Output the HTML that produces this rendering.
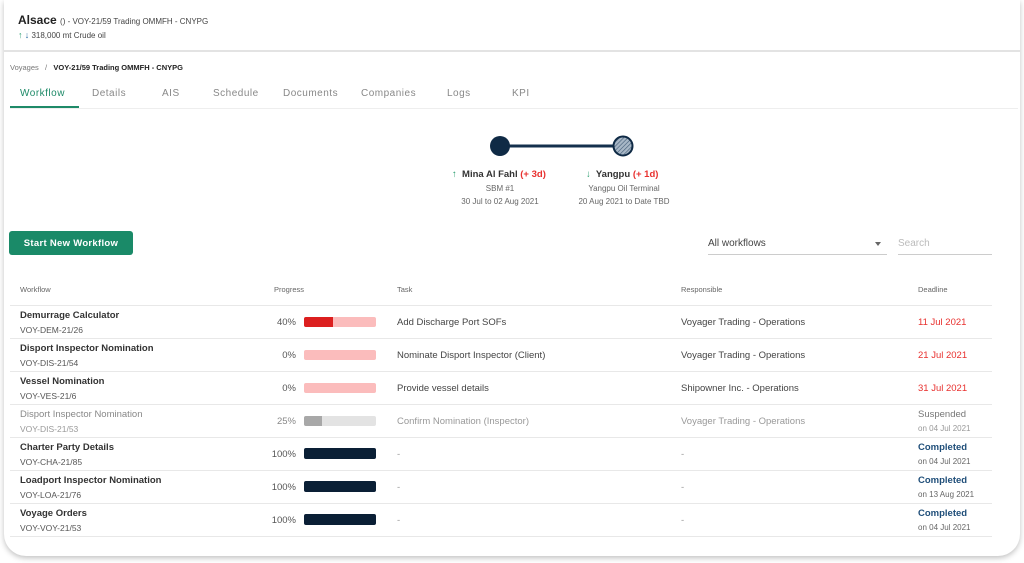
<!DOCTYPE html>
<html><head><style>
*{margin:0;padding:0;box-sizing:border-box}
body{width:1024px;height:563px;background:#fff;font-family:"Liberation Sans",sans-serif;position:relative;overflow:hidden;color:#222}
.card{position:absolute;left:4px;top:0;width:1016px;height:556px;border-radius:0 0 22px 22px;box-shadow:0 2px 6px rgba(0,0,0,.25);background:#fff}
.a{position:absolute;white-space:nowrap}
.hl{position:absolute;left:4px;width:1016px;height:2px;background:#e3e3e3}
.tab{position:absolute;top:88px;font-size:10px;color:#888;letter-spacing:.5px}
.row{position:absolute;left:10px;width:982px;height:1px;background:#e8e8e8}
.t1{font-size:9.5px;font-weight:bold;color:#333}
.t2{font-size:8.5px;color:#555}
.pct{font-size:9.5px;color:#555;text-align:right;width:40px}
.bar{position:absolute;left:304px;width:72px;height:10px;border-radius:2px;overflow:hidden}
.c{font-size:9.5px;color:#444}
.red{color:#e8302e;font-size:9.5px}
.done{color:#1f4e79;font-size:9.5px;font-weight:bold}
</style></head><body>
<div class="card"></div>
<div class="a" style="left:18px;top:13px;font-size:12px;font-weight:bold;color:#222">Alsace <span style="font-size:8px;font-weight:normal;color:#444">() - VOY-21/59 Trading OMMFH - CNYPG</span></div>
<div class="a" style="left:18px;top:30px;font-size:8px;color:#444"><span style="color:#2a9d6f;font-size:9px">↑</span> <span style="color:#2b6ca3;font-size:9px">↓</span> 318,000 mt Crude oil</div>
<div class="hl" style="top:50px"></div>
<div class="a" style="left:10px;top:63px;font-size:7.5px;color:#777">Voyages &nbsp;&nbsp;/&nbsp;&nbsp; <b style="color:#222">VOY-21/59 Trading OMMFH - CNYPG</b></div>
<div class="tab" style="left:20px;color:#1e8a68">Workflow</div>
<div class="tab" style="left:92px">Details</div>
<div class="tab" style="left:162px">AIS</div>
<div class="tab" style="left:213px">Schedule</div>
<div class="tab" style="left:283px">Documents</div>
<div class="tab" style="left:361px">Companies</div>
<div class="tab" style="left:447px">Logs</div>
<div class="tab" style="left:512px">KPI</div>
<div class="a" style="left:10px;top:106px;width:69px;height:2px;background:#1e8a68"></div>
<div class="a" style="left:10px;top:108px;width:1008px;height:1px;background:#eee"></div>
<svg class="a" style="left:488px;top:133px" width="148" height="26"><line x1="12" y1="13" x2="136" y2="13" stroke="#14304d" stroke-width="3"/><circle cx="12" cy="13" r="10" fill="#0f2a45"/><defs><pattern id="h" width="3" height="3" patternUnits="userSpaceOnUse" patternTransform="rotate(45)"><rect width="3" height="3" fill="#a8b7c6"/><line x1="0" y1="0" x2="0" y2="3" stroke="#3f5a75" stroke-width="1.2"/></pattern></defs><circle cx="135" cy="13" r="9.5" fill="url(#h)" stroke="#0f2a45" stroke-width="2"/></svg>
<div class="a" style="left:452px;top:169px;font-size:9.5px;font-weight:bold;color:#333"><span style="color:#2a9d6f">↑</span>&nbsp; Mina Al Fahl <span style="color:#e8302e">(+ 3d)</span></div>
<div class="a" style="left:440px;top:184px;width:120px;text-align:center;font-size:8px;color:#666">SBM #1</div>
<div class="a" style="left:440px;top:197px;width:120px;text-align:center;font-size:8px;color:#666">30 Jul to 02 Aug 2021</div>
<div class="a" style="left:586px;top:169px;font-size:9.5px;font-weight:bold;color:#333"><span style="color:#2a9d6f">↓</span>&nbsp; Yangpu <span style="color:#e8302e">(+ 1d)</span></div>
<div class="a" style="left:564px;top:184px;width:120px;text-align:center;font-size:8px;color:#666">Yangpu Oil Terminal</div>
<div class="a" style="left:564px;top:197px;width:120px;text-align:center;font-size:8px;color:#666">20 Aug 2021 to Date TBD</div>
<div class="a" style="left:9px;top:231px;width:124px;height:24px;background:#1a8a68;border-radius:3px;color:#fff;font-size:9.5px;font-weight:bold;line-height:25px;text-align:center;letter-spacing:.3px">Start New Workflow</div>
<div class="a" style="left:708px;top:238px;font-size:10px;color:#444">All workflows</div>
<div class="a" style="left:875px;top:242px;width:0;height:0;border-left:3px solid transparent;border-right:3px solid transparent;border-top:4px solid #666"></div>
<div class="a" style="left:708px;top:254px;width:179px;height:1px;background:#ccc"></div>
<div class="a" style="left:898px;top:238px;font-size:10px;color:#bbb">Search</div>
<div class="a" style="left:898px;top:254px;width:94px;height:1px;background:#ccc"></div>
<div class="a" style="left:20px;top:285px;font-size:7.5px;color:#666">Workflow</div>
<div class="a" style="left:274px;top:285px;font-size:7.5px;color:#666">Progress</div>
<div class="a" style="left:397px;top:285px;font-size:7.5px;color:#666">Task</div>
<div class="a" style="left:681px;top:285px;font-size:7.5px;color:#666">Responsible</div>
<div class="a" style="left:918px;top:285px;font-size:7.5px;color:#666">Deadline</div>
<div class="row" style="top:305px"></div><div class="row" style="top:338px"></div><div class="row" style="top:371px"></div><div class="row" style="top:404px"></div><div class="row" style="top:437px"></div><div class="row" style="top:470px"></div><div class="row" style="top:503px"></div><div class="row" style="top:536px"></div>

<div class="a t1" style="left:20px;top:310px">Demurrage Calculator</div><div class="a t2" style="left:20px;top:325px">VOY-DEM-21/26</div>
<div class="a pct" style="left:256px;top:317px">40%</div>
<div class="bar" style="top:317px;background:#fbbcbc"><div style="width:29px;height:10px;background:#dc1f1f"></div></div>
<div class="a c" style="left:397px;top:317px">Add Discharge Port SOFs</div><div class="a c" style="left:681px;top:317px">Voyager Trading - Operations</div><div class="a red" style="left:918px;top:317px">11 Jul 2021</div>

<div class="a t1" style="left:20px;top:343px">Disport Inspector Nomination</div><div class="a t2" style="left:20px;top:358px">VOY-DIS-21/54</div>
<div class="a pct" style="left:256px;top:350px">0%</div><div class="bar" style="top:350px;background:#fbbcbc"></div>
<div class="a c" style="left:397px;top:350px">Nominate Disport Inspector (Client)</div><div class="a c" style="left:681px;top:350px">Voyager Trading - Operations</div><div class="a red" style="left:918px;top:350px">21 Jul 2021</div>

<div class="a t1" style="left:20px;top:376px">Vessel Nomination</div><div class="a t2" style="left:20px;top:391px">VOY-VES-21/6</div>
<div class="a pct" style="left:256px;top:383px">0%</div><div class="bar" style="top:383px;background:#fbbcbc"></div>
<div class="a c" style="left:397px;top:383px">Provide vessel details</div><div class="a c" style="left:681px;top:383px">Shipowner Inc. - Operations</div><div class="a red" style="left:918px;top:383px">31 Jul 2021</div>

<div class="a t1" style="left:20px;top:409px;color:#888;font-weight:normal">Disport Inspector Nomination</div><div class="a t2" style="left:20px;top:424px;color:#999">VOY-DIS-21/53</div>
<div class="a pct" style="left:256px;top:416px;color:#888">25%</div>
<div class="bar" style="top:416px;background:#e3e3e3"><div style="width:18px;height:10px;background:#a8a8a8"></div></div>
<div class="a c" style="left:397px;top:416px;color:#999">Confirm Nomination (Inspector)</div><div class="a c" style="left:681px;top:416px;color:#999">Voyager Trading - Operations</div>
<div class="a" style="left:918px;top:409px;font-size:9.5px;color:#777">Suspended</div><div class="a" style="left:918px;top:424px;font-size:8px;color:#999">on 04 Jul 2021</div>

<div class="a t1" style="left:20px;top:442px">Charter Party Details</div><div class="a t2" style="left:20px;top:457px">VOY-CHA-21/85</div>
<div class="a pct" style="left:256px;top:449px">100%</div><div class="bar" style="top:448px;height:11px;background:#0a1f35"></div>
<div class="a c" style="left:397px;top:449px;color:#999">-</div><div class="a c" style="left:681px;top:449px;color:#999">-</div>
<div class="a done" style="left:918px;top:442px">Completed</div><div class="a" style="left:918px;top:457px;font-size:8px;color:#666">on 04 Jul 2021</div>

<div class="a t1" style="left:20px;top:475px">Loadport Inspector Nomination</div><div class="a t2" style="left:20px;top:490px">VOY-LOA-21/76</div>
<div class="a pct" style="left:256px;top:482px">100%</div><div class="bar" style="top:481px;height:11px;background:#0a1f35"></div>
<div class="a c" style="left:397px;top:482px;color:#999">-</div><div class="a c" style="left:681px;top:482px;color:#999">-</div>
<div class="a done" style="left:918px;top:475px">Completed</div><div class="a" style="left:918px;top:490px;font-size:8px;color:#666">on 13 Aug 2021</div>

<div class="a t1" style="left:20px;top:508px">Voyage Orders</div><div class="a t2" style="left:20px;top:523px">VOY-VOY-21/53</div>
<div class="a pct" style="left:256px;top:515px">100%</div><div class="bar" style="top:514px;height:11px;background:#0a1f35"></div>
<div class="a c" style="left:397px;top:515px;color:#999">-</div><div class="a c" style="left:681px;top:515px;color:#999">-</div>
<div class="a done" style="left:918px;top:508px">Completed</div><div class="a" style="left:918px;top:523px;font-size:8px;color:#666">on 04 Jul 2021</div>
</body></html>
